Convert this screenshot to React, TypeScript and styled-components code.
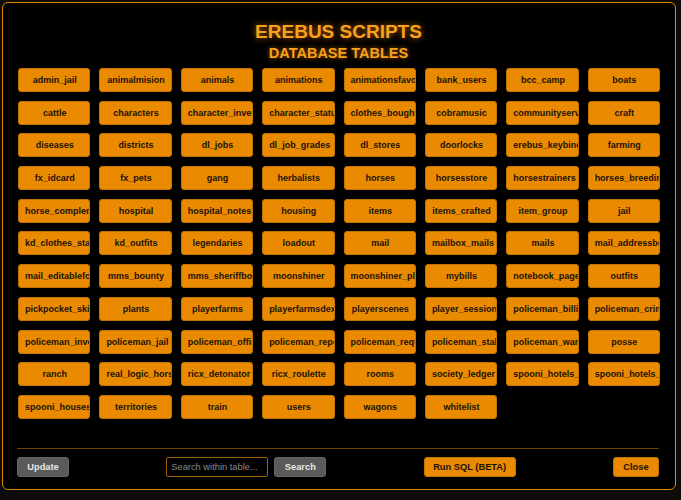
import styled, { createGlobalStyle } from "styled-components";

const GlobalStyle = createGlobalStyle`
  html, body {
    margin: 0;
    padding: 0;
    background: #0e0c0a;
    font-family: "Liberation Sans", Arial, Helvetica, sans-serif;
  }
`;

const tables = [
  "admin_jail", "animalmision", "animals", "animations", "animationsfavorites", "bank_users", "bcc_camp", "boats",
  "cattle", "characters", "character_inventory", "character_status", "clothes_bought", "cobramusic", "communityservice", "craft",
  "diseases", "districts", "dl_jobs", "dl_job_grades", "dl_stores", "doorlocks", "erebus_keybinds", "farming",
  "fx_idcard", "fx_pets", "gang", "herbalists", "horses", "horsesstore", "horsestrainers", "horses_breeding",
  "horse_complements", "hospital", "hospital_notes", "housing", "items", "items_crafted", "item_group", "jail",
  "kd_clothes_stash", "kd_outfits", "legendaries", "loadout", "mail", "mailbox_mails", "mails", "mail_addressbook",
  "mail_editablefolders", "mms_bounty", "mms_sheriffbounty", "moonshiner", "moonshiner_placed", "mybills", "notebook_pages", "outfits",
  "pickpocket_skills", "plants", "playerfarms", "playerfarmsdex", "playerscenes", "player_sessions", "policeman_billing", "policeman_crimes",
  "policeman_investigations", "policeman_jail", "policeman_officers", "policeman_reports", "policeman_requests", "policeman_stables", "policeman_wanted", "posse",
  "ranch", "real_logic_horses", "ricx_detonator", "ricx_roulette", "rooms", "society_ledger", "spooni_hotels_rooms", "spooni_hotels_owners",
  "spooni_houses", "territories", "train", "users", "wagons", "whitelist",
];

const Panel = styled.div`
  box-sizing: border-box;
  margin: 2px 0 0 2px;
  width: 674px;
  height: 488px;
  background: #000;
  border: 1px solid #e08a00;
  border-radius: 6px;
  display: flex;
  flex-direction: column;
  padding: 0 15px 12px 14px;
`;

const Header = styled.div`
  text-align: center;
  padding-top: 18px;
  margin-bottom: 7px;
`;

const Title = styled.h1`
  margin: 0;
  font-size: 19px;
  line-height: 22px;
  font-weight: bold;
  color: #f7a11c;
  text-shadow: 0 0 6px rgba(240, 130, 0, 0.75);
`;

const Subtitle = styled.h2`
  margin: 2px 0 0;
  font-size: 14.5px;
  line-height: 16px;
  font-weight: bold;
  color: #f7a11c;
  text-shadow: 0 0 5px rgba(240, 130, 0, 0.7);
`;

const TableGrid = styled.div`
  flex: 1;
  display: grid;
  grid-template-columns: repeat(8, 1fr);
  grid-auto-rows: 24px;
  column-gap: 9px;
  row-gap: 8.7px;
  align-content: start;
  padding-left: 1px;
`;

const TableButton = styled.button`
  box-sizing: border-box;
  min-width: 0;
  height: 24px;
  padding: 0 5px 0 6px;
  background: #ea8a00;
  border: 1px solid #c47200;
  border-radius: 3px;
  color: #1a1208;
  font-family: "Liberation Sans", Arial, sans-serif;
  font-size: 9px;
  font-weight: bold;
  white-space: nowrap;
  overflow: hidden;
  text-align: center;
  cursor: pointer;
`;

const Footer = styled.div`
  border-top: 1px solid #6e4100;
  padding-top: 8px;
  display: flex;
  justify-content: space-between;
  align-items: center;
  margin-right: 1px;
`;

const SearchGroup = styled.div`
  display: flex;
  align-items: center;
  gap: 6px;
`;

const FooterButton = styled.button<{ $tone: "gray" | "orange"; $w: number }>`
  box-sizing: border-box;
  width: ${(p) => p.$w}px;
  height: 20px;
  padding: 0;
  border-radius: 3px;
  font-family: "Liberation Sans", Arial, sans-serif;
  font-size: 9.3px;
  font-weight: bold;
  cursor: pointer;
  background: ${(p) => (p.$tone === "gray" ? "#5a5a5a" : "#ea8a00")};
  border: 1px solid ${(p) => (p.$tone === "gray" ? "#666" : "#c47200")};
  color: ${(p) => (p.$tone === "gray" ? "#e6e6e6" : "#1a1208")};
`;

const SearchInput = styled.input`
  box-sizing: border-box;
  width: 102px;
  height: 20px;
  background: #000;
  border: 1px solid #a05f00;
  border-radius: 2px;
  padding: 0 4px;
  color: #ddd;
  font-family: "Liberation Sans", Arial, sans-serif;
  font-size: 9.3px;
  outline: none;
  &::placeholder {
    color: #8a8a8a;
  }
`;

export default function App() {
  return (
    <>
      <GlobalStyle />
      <Panel>
        <Header>
          <Title>EREBUS SCRIPTS</Title>
          <Subtitle>DATABASE TABLES</Subtitle>
        </Header>
        <TableGrid>
          {tables.map((t) => (
            <TableButton key={t}>{t}</TableButton>
          ))}
        </TableGrid>
        <Footer>
          <FooterButton $tone="gray" $w={52}>Update</FooterButton>
          <SearchGroup>
            <SearchInput placeholder="Search within table..." />
            <FooterButton $tone="gray" $w={52}>Search</FooterButton>
          </SearchGroup>
          <FooterButton $tone="orange" $w={92}>Run SQL (BETA)</FooterButton>
          <FooterButton $tone="orange" $w={46}>Close</FooterButton>
        </Footer>
      </Panel>
    </>
  );
}
